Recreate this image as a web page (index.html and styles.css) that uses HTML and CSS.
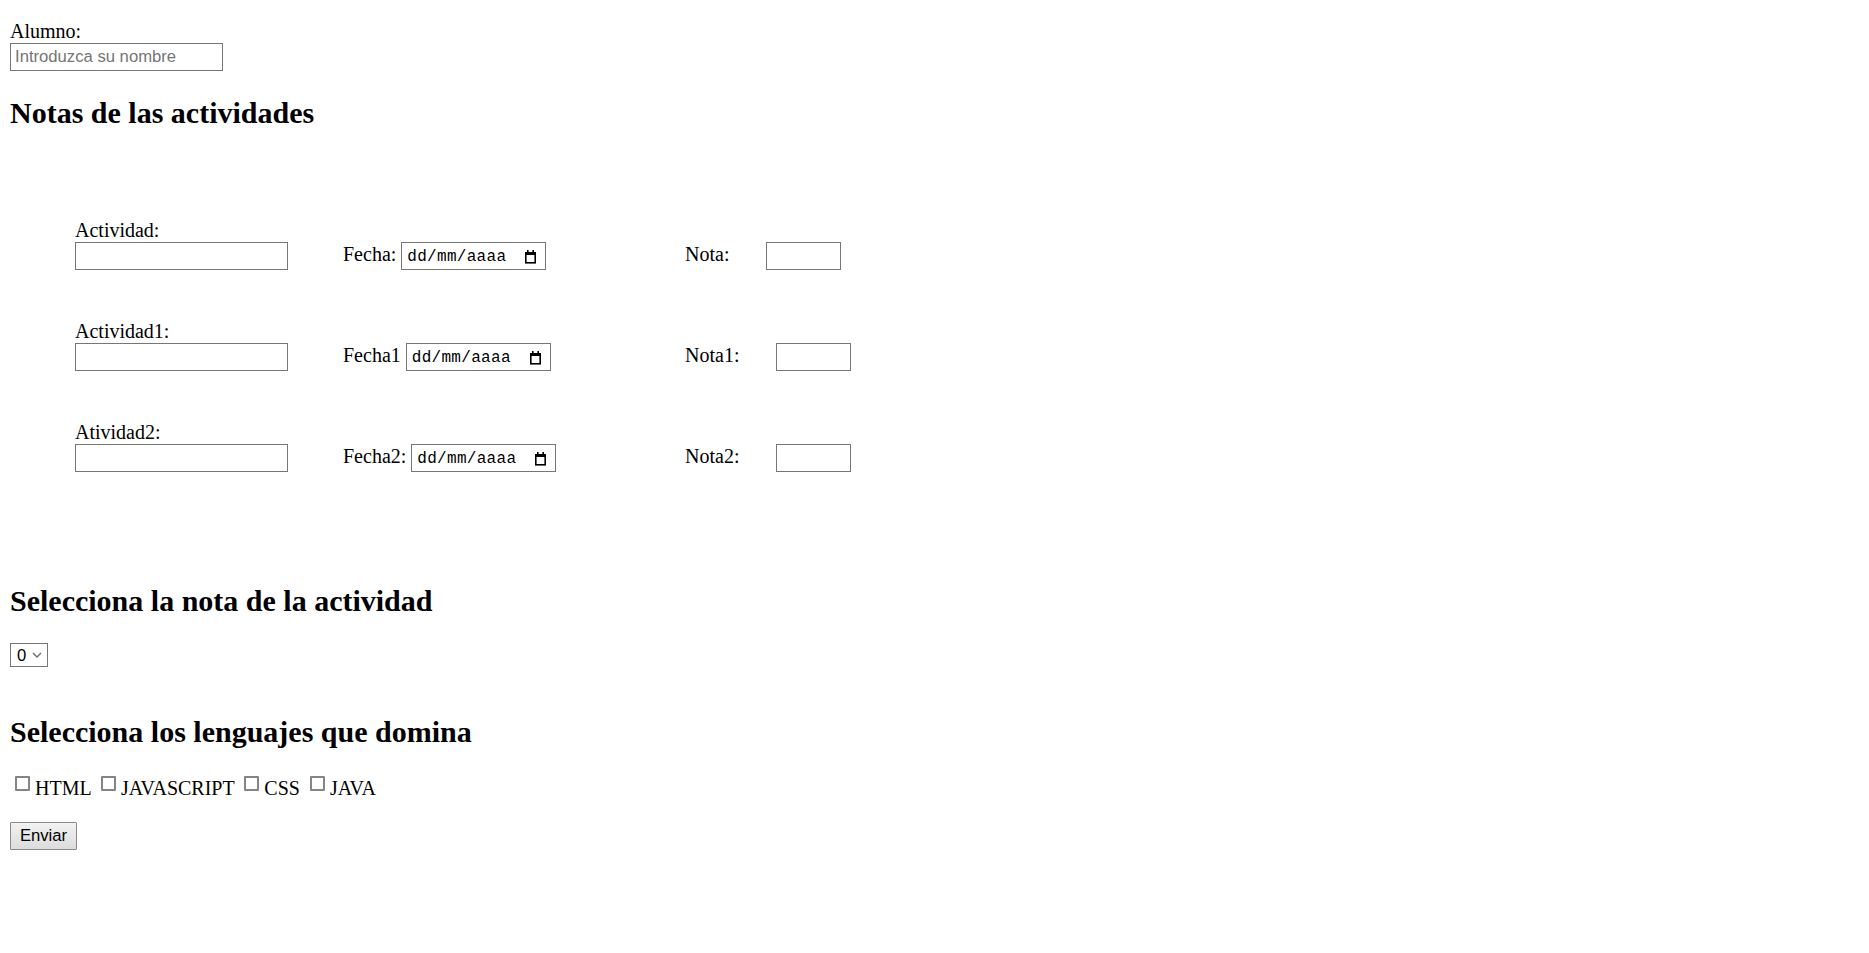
FILE: index.html
```html
<!DOCTYPE html>
<html lang="es">
<head>
  <meta charset="UTF-8" />
  <title>Notas de las actividades</title>
  <link rel="stylesheet" href="styles.css">
</head>
<body>

<form class="notas-form" onsubmit="return false;">
  <label class="field-label" for="alumno">Alumno:</label>
  <input id="alumno" class="txt name" type="text" placeholder="Introduzca su nombre" />

  <h2>Notas de las actividades</h2>

  <div class="activities">
    <!-- fila 0 -->
    <div class="cell stack">
      <label class="field-label" for="act0">Actividad:</label>
      <input id="act0" class="txt act" type="text" />
    </div>
    <div class="cell">
      <label for="fecha0">Fecha:</label> <span class="date" id="fecha0"><span class="date-text">dd/mm/aaaa</span><svg class="cal" width="13" height="15" viewBox="0 0 13 15"><rect x="1.8" y="3.8" width="9.4" height="10" fill="none" stroke="#000" stroke-width="1.6"/><rect x="1" y="3" width="11" height="3" fill="#000"/><rect x="3" y="1" width="1.6" height="3" fill="#000"/><rect x="8.4" y="1" width="1.6" height="3" fill="#000"/></svg></span>
    </div>
    <div class="cell">
      <label for="nota0">Nota:</label><input id="nota0" class="txt nota" type="text" />
    </div>

    <!-- fila 1 -->
    <div class="cell stack">
      <label class="field-label" for="act1">Actividad1:</label>
      <input id="act1" class="txt act" type="text" />
    </div>
    <div class="cell">
      <label for="fecha1">Fecha1</label> <span class="date" id="fecha1"><span class="date-text">dd/mm/aaaa</span><svg class="cal" width="13" height="15" viewBox="0 0 13 15"><rect x="1.8" y="3.8" width="9.4" height="10" fill="none" stroke="#000" stroke-width="1.6"/><rect x="1" y="3" width="11" height="3" fill="#000"/><rect x="3" y="1" width="1.6" height="3" fill="#000"/><rect x="8.4" y="1" width="1.6" height="3" fill="#000"/></svg></span>
    </div>
    <div class="cell">
      <label for="nota1">Nota1:</label><input id="nota1" class="txt nota" type="text" />
    </div>

    <!-- fila 2 -->
    <div class="cell stack">
      <label class="field-label" for="act2">Atividad2:</label>
      <input id="act2" class="txt act" type="text" />
    </div>
    <div class="cell">
      <label for="fecha2">Fecha2:</label> <span class="date" id="fecha2"><span class="date-text">dd/mm/aaaa</span><svg class="cal" width="13" height="15" viewBox="0 0 13 15"><rect x="1.8" y="3.8" width="9.4" height="10" fill="none" stroke="#000" stroke-width="1.6"/><rect x="1" y="3" width="11" height="3" fill="#000"/><rect x="3" y="1" width="1.6" height="3" fill="#000"/><rect x="8.4" y="1" width="1.6" height="3" fill="#000"/></svg></span>
    </div>
    <div class="cell">
      <label for="nota2">Nota2:</label><input id="nota2" class="txt nota" type="text" />
    </div>
  </div>

  <h2>Selecciona la nota de la actividad</h2>

  <div class="select-wrap">
    <span class="fake-select">0<svg class="chev" width="10" height="6" viewBox="0 0 10 6"><path d="M1 1 L5 5 L9 1" fill="none" stroke="#6d6d6d" stroke-width="1.4"/></svg></span>
  </div>

  <h2>Selecciona los lenguajes que domina</h2>

  <div class="langs">
    <label><span class="check"></span>HTML</label>
    <label><span class="check"></span>JAVASCRIPT</label>
    <label><span class="check"></span>CSS</label>
    <label><span class="check"></span>JAVA</label>
  </div>

  <button class="send" type="submit">Enviar</button>
</form>

</body>
</html>
```

FILE: styles.css
```css
body {
  margin: 0;
  padding: 20px 10px;
  background: #fff;
  color: #000;
  font-family: "Liberation Serif", "Times New Roman", serif;
  font-size: 20px;
  line-height: 23px;
}

h2 {
  font-size: 30px;
  line-height: 34px;
  font-weight: bold;
  margin: 25px 0;
}

.field-label {
  display: block;
}

.txt {
  box-sizing: border-box;
  height: 28px;
  border: 1px solid #767676;
  border-radius: 0;
  padding: 1px 4px;
  font-family: "Liberation Sans", Arial, sans-serif;
  font-size: 16.67px;
  background: #fff;
  color: #000;
  outline: none;
}

.txt::placeholder {
  color: #757575;
}

.name {
  display: block;
  width: 213px;
}

.activities {
  display: grid;
  grid-template-columns: 268px 342px auto;
  row-gap: 50px;
  padding: 64px 0 87px 65px;
}

.cell {
  align-self: end;
  white-space: nowrap;
}

.act {
  display: block;
  width: 213px;
}

.nota {
  width: 75px;
  margin-left: 37px;
  vertical-align: baseline;
}

.date {
  box-sizing: border-box;
  display: inline-flex;
  align-items: center;
  justify-content: space-between;
  width: 145px;
  height: 28px;
  padding: 1px 8px 0 5px;
  border: 1px solid #767676;
  font-family: "Liberation Mono", "Courier New", monospace;
  font-size: 16px;
  line-height: 18px;
  letter-spacing: 0.3px;
}

.cal {
  display: block;
}

.select-wrap {
  padding-bottom: 23px;
}

.fake-select {
  box-sizing: border-box;
  display: inline-flex;
  align-items: center;
  justify-content: space-between;
  width: 38px;
  height: 24px;
  padding: 0 5px 0 6px;
  border: 1px solid #767676;
  font-family: "Liberation Sans", Arial, sans-serif;
  font-size: 16.67px;
  vertical-align: top;
}

.chev {
  display: block;
}

.langs {
  padding-top: 2px;
}

.check {
  box-sizing: border-box;
  display: inline-block;
  width: 15px;
  height: 15px;
  margin: 0 5px 4px 5px;
  border: 2px solid #858585;
  border-radius: 1px;
  background: #fff;
}

.send {
  display: block;
  box-sizing: border-box;
  width: 67px;
  height: 28px;
  margin-top: 22px;
  padding: 0;
  border: 1px solid #8a8a8a;
  border-radius: 1px;
  background: linear-gradient(#f2f2f2, #dcdcdc);
  font-family: "Liberation Sans", Arial, sans-serif;
  font-size: 16.67px;
  color: #000;
}
```
